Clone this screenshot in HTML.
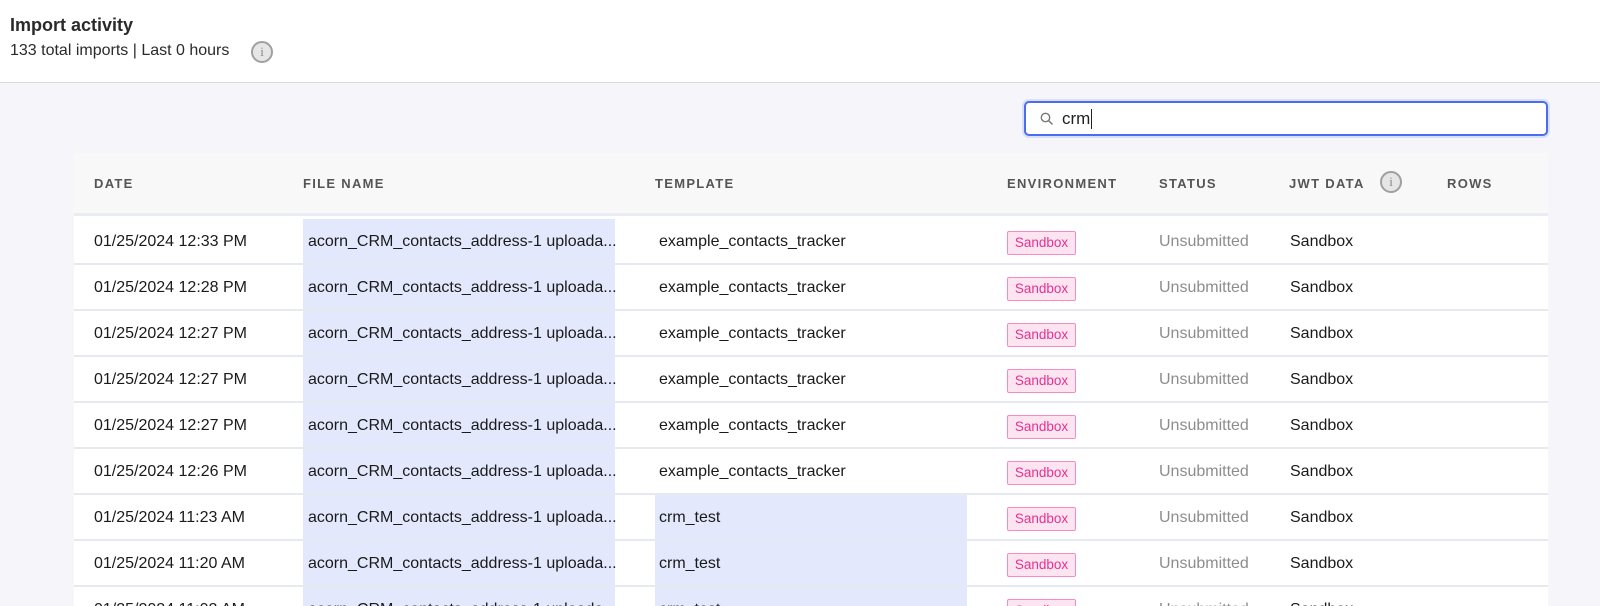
<!DOCTYPE html>
<html style="width:1600px;height:606px;overflow:hidden"><head><meta charset="utf-8"><style>
*{box-sizing:border-box;margin:0;padding:0}
body{width:1600px;height:606px;overflow:hidden;background:#f6f6fa;font-family:"Liberation Sans",sans-serif;color:#1a1a1a;position:relative}
.top{position:absolute;left:0;top:0;width:1600px;height:83px;background:#fff;border-bottom:1px solid #dcdcdc}
.title{position:absolute;left:10px;top:15px;font-size:18px;font-weight:bold;color:#2a2a2a}
.sub{position:absolute;left:10px;top:42px;font-size:16px;color:#2a2a2a}
.info{position:absolute;width:22px;height:22px;border:2px solid #a0a0a0;border-radius:50%;background:#e6e6e6;color:#8a8a8a;font-size:13px;text-align:center;line-height:18px;font-family:"Liberation Serif",serif}
.search{position:absolute;left:1024px;top:101px;width:524px;height:35px;background:#fff;border:2px solid #4b6ef0;border-radius:5px;box-shadow:0 0 0 2px #d8e0fb}
.search span{position:absolute;left:36px;top:6px;font-size:17px;color:#222;border-right:1px solid #222;line-height:20px;padding-right:1px}
.table{position:absolute;left:74px;top:153px;width:1474px;height:453px;background:#fff;overflow:hidden}
.head{position:absolute;left:0;top:0;width:1474px;height:63px;background:#f8f8f8;border-bottom:3px solid #e9ecf2}
.h{position:absolute;top:23px;font-size:13px;font-weight:bold;letter-spacing:1.3px;color:#555}
.row{position:absolute;left:0;width:1474px;height:46px;border-bottom:2px solid #e6e9ef}
.c{position:absolute;top:0;height:44px;line-height:46px;font-size:16px;white-space:nowrap}
.hl{background:#e3e8fd}
.badge{position:absolute;left:933px;top:12px;height:24px;width:69px;border:1px solid #f58cc4;background:#fde4f1;color:#e6318f;border-radius:2px;font-size:13.5px;line-height:22px;text-align:center}
.st{color:#8d8d8d}
</style></head><body>
<div class="top">
<div class="title">Import activity</div>
<div class="sub">133 total imports | Last 0 hours</div>
<div class="info" style="left:251px;top:41px">i</div>
</div>
<div class="search"><svg style="position:absolute;left:14px;top:9px" width="14" height="14" viewBox="0 0 14 14"><circle cx="5.5" cy="5.5" r="4.2" fill="none" stroke="#777" stroke-width="1.4"/><line x1="8.6" y1="8.6" x2="12.5" y2="12.5" stroke="#777" stroke-width="1.5"/></svg><span>crm</span></div>
<div class="table">
<div class="head">
<div class="h" style="left:20px">DATE</div>
<div class="h" style="left:229px">FILE NAME</div>
<div class="h" style="left:581px">TEMPLATE</div>
<div class="h" style="left:933px">ENVIRONMENT</div>
<div class="h" style="left:1085px">STATUS</div>
<div class="h" style="left:1215px">JWT DATA</div>
<div class="info" style="left:1306px;top:18px">i</div>
<div class="h" style="left:1373px">ROWS</div>
</div>
<div id="rows"></div>
</div>
<script>
var d=["12:33 PM","12:28 PM","12:27 PM","12:27 PM","12:27 PM","12:26 PM","11:23 AM","11:20 AM","11:02 AM"];
var h="";
for(var i=0;i<9;i++){var crm=i>=6;
h+='<div class="row" style="top:'+(66+i*46)+'px">'+
'<div class="c" style="left:20px">01/25/2024 '+d[i]+'</div>'+
'<div class="c hl" style="left:229px;width:312px;padding-left:5px">acorn_CRM_contacts_address-1 uploada...</div>'+
'<div class="c'+(crm?' hl':'')+'" style="left:581px;width:312px;padding-left:4px">'+(crm?'crm_test':'example_contacts_tracker')+'</div>'+
'<div class="badge">Sandbox</div>'+
'<div class="c st" style="left:1085px">Unsubmitted</div>'+
'<div class="c" style="left:1216px">Sandbox</div></div>';}
document.getElementById('rows').innerHTML=h;
</script>
</body></html>
